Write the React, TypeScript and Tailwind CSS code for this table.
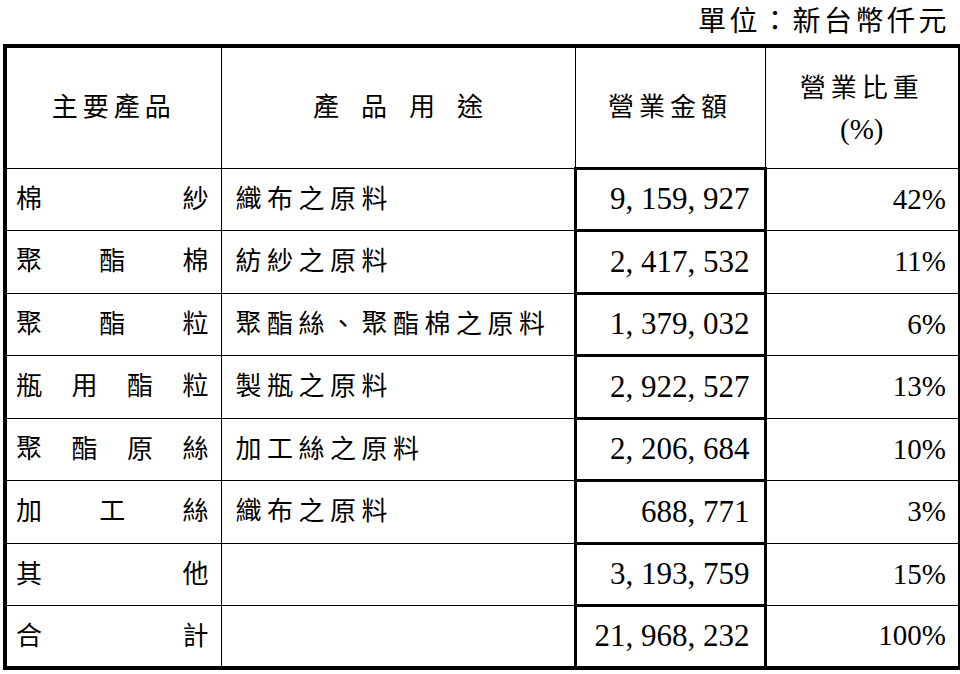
const rows = [
  { name: ['棉', '紗'], use: '織布之原料', amount: '9,159,927', pct: '42%' },
  { name: ['聚', '酯', '棉'], use: '紡紗之原料', amount: '2,417,532', pct: '11%' },
  { name: ['聚', '酯', '粒'], use: '聚酯絲、聚酯棉之原料', amount: '1,379,032', pct: '6%' },
  { name: ['瓶', '用', '酯', '粒'], use: '製瓶之原料', amount: '2,922,527', pct: '13%' },
  { name: ['聚', '酯', '原', '絲'], use: '加工絲之原料', amount: '2,206,684', pct: '10%' },
  { name: ['加', '工', '絲'], use: '織布之原料', amount: '688,771', pct: '3%' },
  { name: ['其', '他'], use: '', amount: '3,193,759', pct: '15%' },
  { name: ['合', '計'], use: '', amount: '21,968,232', pct: '100%' },
]

// comma gets a half-width slot, like the Ming font in the original
function Amount({ value }: { value: string }) {
  const parts = value.split(',')
  return (
    <>
      {parts.map((p, i) => (
        <span key={i}>
          {p}
          {i < parts.length - 1 && <span className="inline-block w-[0.5em] text-left">,</span>}
        </span>
      ))}
    </>
  )
}

export default function App() {
  return (
    <div
      className="w-[960px] h-[674px] bg-white text-black overflow-hidden"
      style={{ fontFamily: '"Liberation Serif", "Noto Sans CJK TC", serif' }}
    >
      {/* 單位 */}
      <div className="h-[44px] flex justify-end items-center pr-[10px] text-[28px] tracking-[3.5px] leading-none">
        單位：新台幣仟元
      </div>

      <table className="ml-[3px] w-[955px] table-fixed border-collapse border-4 border-black">
        <colgroup>
          <col className="w-[216px]" />
          <col className="w-[354px]" />
          <col className="w-[190px]" />
          <col className="w-[195px]" />
        </colgroup>
        <thead>
          <tr className="h-[122px]">
            <th className="border border-black font-normal text-[26px] tracking-[5px] text-center align-middle">
              主要產品
            </th>
            <th className="border border-black font-normal text-[26px] align-middle">
              <div className="flex justify-center gap-[22px]">
                <span>產</span>
                <span>品</span>
                <span>用</span>
                <span>途</span>
              </div>
            </th>
            <th className="border border-black font-normal text-[26px] tracking-[5px] text-center align-middle">
              營業金額
            </th>
            <th className="border border-black font-normal text-[26px] text-center align-middle leading-[40px] pt-[2px]">
              <div className="tracking-[5px]">營業比重</div>
              <div className="text-[29px]">(%)</div>
            </th>
          </tr>
        </thead>
        <tbody>
          {rows.map((r, i) => (
            <tr key={i} className="h-[62.5px]">
              <td className="border border-black pl-[9px] pr-[12px] text-[26px] align-middle">
                <div className="flex justify-between">
                  {r.name.map((c, j) => (
                    <span key={j}>{c}</span>
                  ))}
                </div>
              </td>
              <td className="border border-black pl-[14px] text-[26px] tracking-[5.5px] align-middle whitespace-nowrap">
                {r.use}
              </td>
              <td className="border-[3px] border-black pr-[14px] text-right text-[31px] align-middle">
                <Amount value={r.amount} />
              </td>
              <td className="border border-black pr-[12px] text-right text-[29px] align-middle">
                {r.pct}
              </td>
            </tr>
          ))}
        </tbody>
      </table>
    </div>
  )
}
